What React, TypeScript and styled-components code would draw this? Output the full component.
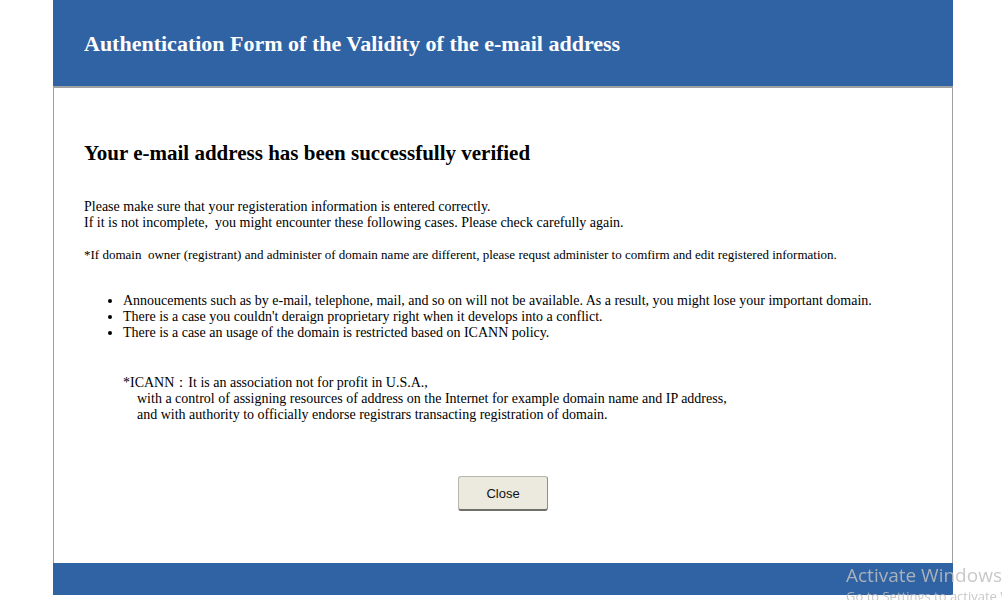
import styled, { createGlobalStyle } from 'styled-components';

const GlobalStyle = createGlobalStyle`
  html, body {
    margin: 0;
    padding: 0;
    background: #fff;
  }
  body {
    font-family: "Liberation Serif", "Times New Roman", serif;
    color: #000;
  }
`;

const Page = styled.div`
  width: 900px;
  margin-left: 53px;
`;

const Header = styled.header`
  display: flex;
  align-items: center;
  height: 86px;
  padding: 0 31px;
  background-color: #3063a4;
  border-bottom: 2px solid #a0a0a0;
`;

const Title = styled.h1`
  margin: 0;
  padding-top: 2px;
  font-size: 22px;
  font-weight: bold;
  color: #fff;
`;

const Content = styled.main`
  box-sizing: border-box;
  height: 475px;
  padding: 53px 30px 0 30px;
  border-left: 1px solid #a0a0a0;
  border-right: 1px solid #a0a0a0;
`;

const Heading = styled.h2`
  margin: 0 0 34px 0;
  font-size: 21px;
  line-height: 24px;
  font-weight: bold;
`;

const Text = styled.p<{ $size?: number; $gap?: number }>`
  margin: 0 0 ${(p) => p.$gap ?? 0}px 0;
  font-size: ${(p) => p.$size ?? 14}px;
  line-height: 16px;
`;

const List = styled.ul`
  margin: 0 0 34px 0;
  padding-left: 39px;
  font-size: 14px;
  line-height: 16px;
`;

const Note = styled.div`
  padding-left: 39px;
  font-size: 14px;
  line-height: 16px;
`;

const NoteLine = styled.div<{ $indent?: boolean }>`
  padding-left: ${(p) => (p.$indent ? 14 : 0)}px;
`;

const ButtonRow = styled.div`
  display: flex;
  justify-content: center;
  margin-top: 53px;
`;

const CloseButton = styled.button`
  width: 90px;
  height: 35px;
  font-family: "Liberation Sans", Arial, sans-serif;
  font-size: 13px;
  color: #111;
  background-color: #ece9df;
  border: 1px solid #b8b6ae;
  border-bottom: 2px solid #6f6e6a;
  border-right: 1px solid #8f8e8a;
  border-radius: 3px;
  cursor: pointer;
`;

const Footer = styled.footer`
  height: 32px;
  background-color: #3063a4;
`;

const Watermark = styled.div`
  position: fixed;
  left: 846px;
  top: 563px;
  font-family: "Open Sans", "DejaVu Sans", sans-serif;
  color: rgba(190, 190, 190, 0.85);
  white-space: nowrap;
  pointer-events: none;
`;

const WatermarkTitle = styled.div`
  font-size: 19px;
  line-height: 24px;
`;

const WatermarkSub = styled.div`
  font-size: 13px;
  line-height: 18px;
`;

const App = () => (
  <>
    <GlobalStyle />
    <Page>
      <Header>
        <Title>Authentication Form of the Validity of the e-mail address</Title>
      </Header>
      <Content>
        <Heading>Your e-mail address has been successfully verified</Heading>
        <Text>Please make sure that your registeration information is entered correctly.</Text>
        <Text $gap={16}>
          If it is not incomplete,&nbsp; you might encounter these following cases. Please check carefully again.
        </Text>
        <Text $size={13} $gap={30}>
          *If domain&nbsp; owner (registrant) and administer of domain name are different, please requst administer to comfirm and edit registered information.
        </Text>
        <List>
          <li>
            Annoucements such as by e-mail, telephone, mail, and so on will not be available. As a result, you might lose your important domain.
          </li>
          <li>There is a case you couldn't deraign proprietary right when it develops into a conflict.</li>
          <li>There is a case an usage of the domain is restricted based on ICANN policy.</li>
        </List>
        <Note>
          <NoteLine>*ICANN：It is an association not for profit in U.S.A.,</NoteLine>
          <NoteLine $indent>
            with a control of assigning resources of address on the Internet for example domain name and IP address,
          </NoteLine>
          <NoteLine $indent>
            and with authority to officially endorse registrars transacting registration of domain.
          </NoteLine>
        </Note>
        <ButtonRow>
          <CloseButton type="button">Close</CloseButton>
        </ButtonRow>
      </Content>
      <Footer />
    </Page>
    <Watermark>
      <WatermarkTitle>Activate Windows</WatermarkTitle>
      <WatermarkSub>Go to Settings to activate Windows.</WatermarkSub>
    </Watermark>
  </>
);

export default App;
